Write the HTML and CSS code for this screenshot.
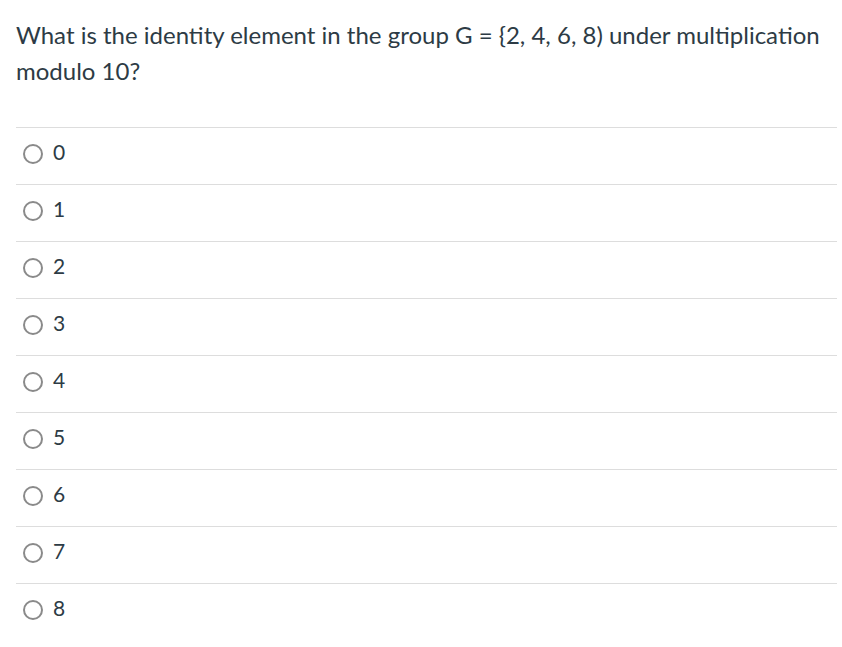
FILE: index.html
```html
<!DOCTYPE html>
<html lang="en">
<head>
    <meta charset="UTF-8">
    <meta name="viewport" content="width=device-width, initial-scale=1.0">
    <title>Quiz Question</title>
    <link rel="stylesheet" href="styles.css">
</head>
<body>
    <form class="question">
        <fieldset class="answers">
            <legend class="question-text">What is the identity element in the group G = {2, 4, 6, 8) under multiplication modulo 10?</legend>
            <label class="answer"><input type="radio" name="answer" value="0"> <span>0</span></label>
            <label class="answer"><input type="radio" name="answer" value="1"> <span>1</span></label>
            <label class="answer"><input type="radio" name="answer" value="2"> <span>2</span></label>
            <label class="answer"><input type="radio" name="answer" value="3"> <span>3</span></label>
            <label class="answer"><input type="radio" name="answer" value="4"> <span>4</span></label>
            <label class="answer"><input type="radio" name="answer" value="5"> <span>5</span></label>
            <label class="answer"><input type="radio" name="answer" value="6"> <span>6</span></label>
            <label class="answer"><input type="radio" name="answer" value="7"> <span>7</span></label>
            <label class="answer"><input type="radio" name="answer" value="8"> <span>8</span></label>
        </fieldset>
    </form>
</body>
</html>
```
FILE: styles.css
```css
body {
    margin: 0;
    font-family: Lato, "Liberation Sans", sans-serif;
    color: #2d3b45;
    background-color: #fff;
}
.question {
    padding: 17px 5px 0 16px;
}
.answers {
    margin: 0;
    padding: 0;
    border: 0;
    min-width: 0;
}
.question-text {
    padding: 0 0 38px;
    font-size: 24px;
    line-height: 36px;
}
.answer {
    display: flex;
    align-items: center;
    gap: 10px;
    padding: 11px 0 15px 7px;
    border-top: 1px solid #ddd;
    font-size: 21px;
    line-height: 26px;
}
.answer span {
    padding-bottom: 4px;
}
input[type='radio'] {
    appearance: none;
    box-sizing: border-box;
    width: 20px;
    height: 20px;
    margin: 0;
    border: 2px solid #8a8a8a;
    border-radius: 50%;
}
input[type='radio']:checked {
    border: 6px solid #0075ff;
}
```
